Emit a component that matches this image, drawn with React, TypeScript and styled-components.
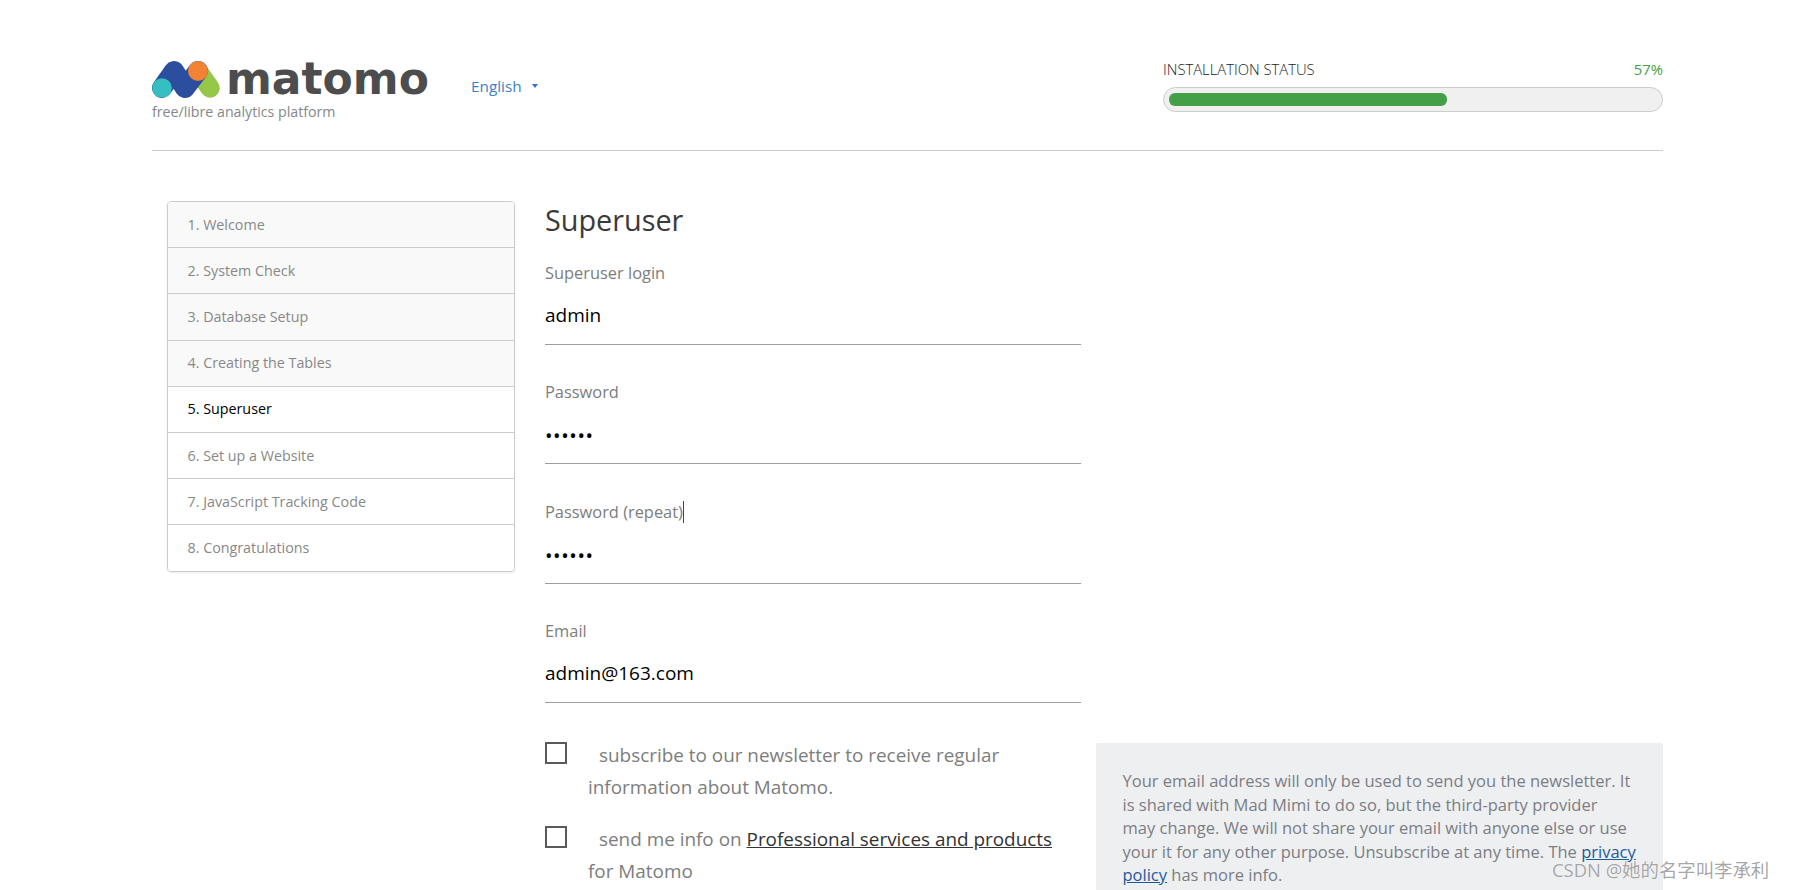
import { FunctionComponent } from 'react'
import styled, { createGlobalStyle } from 'styled-components'

const GlobalStyle = createGlobalStyle`
  html, body {
    margin: 0;
    height: 890px;
    overflow: hidden;
    background: #fff;
    font-family: "Open Sans", "Noto Sans", "Liberation Sans", sans-serif;
  }
  * {
    box-sizing: border-box;
  }
`

const steps = [
  '1. Welcome',
  '2. System Check',
  '3. Database Setup',
  '4. Creating the Tables',
  '5. Superuser',
  '6. Set up a Website',
  '7. JavaScript Tracking Code',
  '8. Congratulations'
]

const Page = styled.div`
  width: 1511px;
  height: 890px;
  margin-left: 152px;
  overflow: hidden;
`

const Header = styled.header`
  height: 151px;
  border-bottom: 1px solid #ccc;
  display: flex;
  justify-content: space-between;
`

const Brand = styled.div`
  display: flex;
  align-items: flex-start;
  padding-top: 60px;
`

const LogoBlock = styled.div`
  width: 275px;
`

const LogoRow = styled.div`
  display: flex;
  align-items: center;
  height: 38px;
`

const LogoSvg = styled.svg`
  flex: none;
  width: 70px;
  height: 38px;
`

const WordMark = styled.span`
  margin-left: 4px;
  font-family: "DejaVu Sans", Inter, sans-serif;
  font-size: 44px;
  font-weight: 700;
  line-height: 38px;
  color: #4d4d4d;
  white-space: nowrap;
`

const Tagline = styled.div`
  font-size: 14.2px;
  line-height: 18px;
  margin-top: 5px;
  color: #85878a;
`

const Language = styled.div`
  display: flex;
  align-items: center;
  margin: 15px 0 0 44px;
  font-size: 15.3px;
  line-height: 22px;
  color: #3a82c9;
`

const Caret = styled.span`
  width: 0;
  height: 0;
  margin-left: 10px;
  border-left: 3px solid transparent;
  border-right: 3px solid transparent;
  border-top: 4px solid #3a6fc0;
`

const Status = styled.div`
  width: 500px;
  padding-top: 59px;
`

const StatusTop = styled.div`
  display: flex;
  justify-content: space-between;
  font-size: 14.8px;
  line-height: 20px;
  font-weight: 300;
  color: #222;
`

const Percent = styled.span`
  font-weight: 400;
  color: #43a047;
`

const Track = styled.div`
  height: 25px;
  margin-top: 8px;
  padding: 5px;
  border: 1px solid #ccc;
  border-radius: 13px;
  background: #f0f0f0;
`

const Fill = styled.div`
  height: 13px;
  border-radius: 6px;
  background: #43a047;
`

const Body = styled.div`
  display: flex;
  align-items: flex-start;
`

const StepList = styled.ul`
  width: 348px;
  margin: 50px 0 0 15px;
  padding: 0;
  list-style: none;
  border: 1px solid #ccc;
  border-radius: 4px;
  box-shadow: 0 1px 2px rgba(0, 0, 0, 0.08);
  overflow: hidden;
`

const Step = styled.li<{ $state: 'done' | 'active' | 'todo' }>`
  height: 46.2px;
  padding: 0 0 1px 19.5px;
  display: flex;
  align-items: center;
  font-size: 14.3px;
  color: ${(p) => (p.$state === 'active' ? '#000' : '#888')};
  background: ${(p) => (p.$state === 'done' ? '#f9f9f9' : '#fff')};
  border-top: 1px solid #ccc;

  &:first-child {
    height: 45.2px;
    border-top: 0;
  }
`

const Main = styled.main`
  width: 1118px;
  margin-left: 30px;
`

const Title = styled.h2`
  margin: 50px 0 0;
  font-size: 28.8px;
  font-weight: 400;
  line-height: 38px;
  color: #3a3a3a;
`

const Fields = styled.div`
  width: 536px;
  margin-top: 22px;
`

const Field = styled.div`
  height: 119.3px;
`

const FieldLabel = styled.label`
  display: block;
  font-size: 16.4px;
  line-height: 24px;
  color: #7d7d7d;
`

const Input = styled.input`
  display: block;
  width: 100%;
  height: 60px;
  padding: 1px 0 0;
  border: 0;
  border-bottom: 1px solid #9e9e9e;
  border-radius: 0;
  outline: 0;
  background: transparent;
  font-family: inherit;
  font-size: 19px;
  color: #000;

  &[type='password'] {
    padding-top: 4px;
    font-size: 20px;
    letter-spacing: 0.6px;
  }
`

const MouseCaret = styled.span`
  display: inline-block;
  width: 1px;
  height: 22px;
  vertical-align: -5px;
  background: #444;
`

const Bottom = styled.div`
  display: flex;
  justify-content: space-between;
  margin-top: 1px;
`

const Options = styled.div`
  width: 536px;
`

const Option = styled.label`
  position: relative;
  display: block;
  padding: 0 20px 0 43px;
  margin-bottom: 20px;
  font-size: 18.9px;
  line-height: 32px;
  color: #7d7d7d;
`

const Box = styled.span`
  position: absolute;
  left: 0;
  top: 3px;
  width: 22px;
  height: 22px;
  border: 2px solid #5a5a5a;
`

const OptionText = styled.span`
  display: block;
  text-indent: 11px;
`

const OptionLink = styled.a`
  color: #333;
  text-decoration: underline;
`

const Note = styled.aside`
  width: 567px;
  height: 300px;
  margin-top: 4px;
  padding: 26px 10px 0 26.5px;
  border-radius: 2px;
  background: #eeeff1;
  font-size: 16.5px;
  line-height: 23.5px;
  color: #7b7e84;
`

const NoteLink = styled.a`
  color: #1d5a9b;
  text-decoration: underline;
`

const Watermark = styled.div`
  position: absolute;
  left: 1552px;
  top: 858px;
  font-family: "Open Sans", "Noto Sans CJK SC", sans-serif;
  font-size: 18.4px;
  line-height: 24px;
  white-space: nowrap;
  color: rgba(150, 150, 150, 0.85);
  text-shadow: 0 0 1px rgba(255, 255, 255, 0.9);
`

const LogoMark: FunctionComponent = () => (
  <LogoSvg viewBox="0 0 70 38" aria-hidden="true">
    <path d="M46 11 L58 28" stroke="#95c748" strokeWidth="19.5" strokeLinecap="round" fill="none" />
    <path
      d="M10 28 L22 11 L33 28 L46 11"
      stroke="#2b4f9e"
      strokeWidth="20"
      strokeLinecap="round"
      strokeLinejoin="round"
      fill="none"
    />
    <circle cx="10" cy="28" r="9.8" fill="#35bfc0" />
    <circle cx="46" cy="11" r="10" fill="#f38334" />
  </LogoSvg>
)

export default function App() {
  return (
    <>
      <GlobalStyle />
      <Page>
        <Header>
          <Brand>
            <LogoBlock>
              <LogoRow>
                <LogoMark />
                <WordMark>matomo</WordMark>
              </LogoRow>
              <Tagline>free/libre analytics platform</Tagline>
            </LogoBlock>
            <Language>
              English
              <Caret />
            </Language>
          </Brand>
          <Status>
            <StatusTop>
              <span>INSTALLATION STATUS</span>
              <Percent>57%</Percent>
            </StatusTop>
            <Track>
              <Fill style={{ width: `${(278 / 488) * 100}%` }} />
            </Track>
          </Status>
        </Header>
        <Body>
          <StepList>
            {steps.map((step, i) => (
              <Step key={step} $state={i < 4 ? 'done' : i === 4 ? 'active' : 'todo'}>
                {step}
              </Step>
            ))}
          </StepList>
          <Main>
            <Title>Superuser</Title>
            <Fields>
              <Field>
                <FieldLabel>Superuser login</FieldLabel>
                <Input type="text" defaultValue="admin" />
              </Field>
              <Field>
                <FieldLabel>Password</FieldLabel>
                <Input type="password" defaultValue="123456" />
              </Field>
              <Field>
                <FieldLabel>
                  Password (repeat)
                  <MouseCaret />
                </FieldLabel>
                <Input type="password" defaultValue="123456" />
              </Field>
              <Field>
                <FieldLabel>Email</FieldLabel>
                <Input type="text" defaultValue="admin@163.com" />
              </Field>
            </Fields>
            <Bottom>
              <Options>
                <Option>
                  <Box />
                  <OptionText>subscribe to our newsletter to receive regular information about Matomo.</OptionText>
                </Option>
                <Option>
                  <Box />
                  <OptionText>
                    send me info on <OptionLink>Professional services and products</OptionLink> for Matomo
                  </OptionText>
                </Option>
              </Options>
              <Note>
                Your email address will only be used to send you the newsletter. It
                <br />
                is shared with Mad Mimi to do so, but the third-party provider
                <br />
                may change. We will not share your email with anyone else or use
                <br />
                your it for any other purpose. Unsubscribe at any time. The <NoteLink>privacy</NoteLink>
                <br />
                <NoteLink>policy</NoteLink> has more info.
              </Note>
            </Bottom>
          </Main>
        </Body>
      </Page>
      <Watermark>CSDN @她的名字叫李承利</Watermark>
    </>
  )
}
